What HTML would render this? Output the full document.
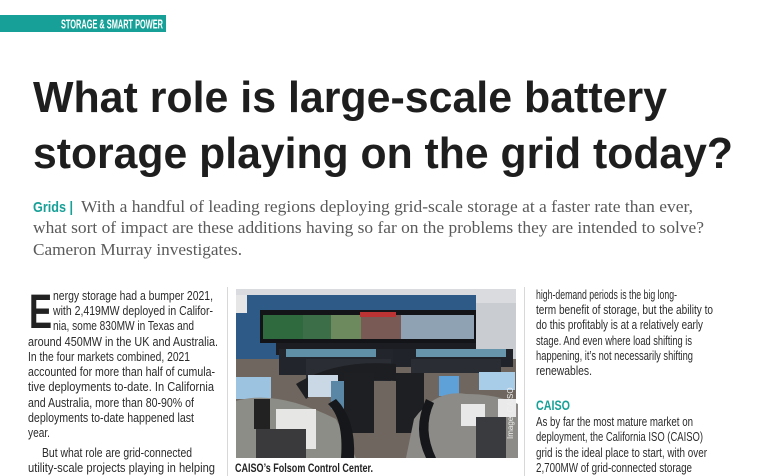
<!DOCTYPE html>
<html><head><meta charset="utf-8"><style>
html,body{margin:0;padding:0;background:#fff;width:768px;height:476px;overflow:hidden}
svg{display:block}
.b{font-family:"Liberation Sans",sans-serif;font-size:12.5px;fill:#2b2b2b}
.s{font-family:"Liberation Serif",serif;font-size:17px;fill:#5a5a5a}
.t{font-family:"Liberation Sans",sans-serif;font-weight:bold;font-size:44px;fill:#1e1e1e}
</style></head><body>
<svg width="768" height="476" viewBox="0 0 768 476" xmlns="http://www.w3.org/2000/svg">
<rect x="0" y="15" width="166" height="17" fill="#17a097"/>
<text x="61" y="28.5" font-family="Liberation Sans,sans-serif" font-weight="bold" font-size="12.5" fill="#fff" textLength="102" lengthAdjust="spacingAndGlyphs">STORAGE &amp; SMART POWER</text>

<text class="t" x="33" y="112" textLength="634" lengthAdjust="spacingAndGlyphs">What role is large-scale battery</text>
<text class="t" x="33" y="168" textLength="700" lengthAdjust="spacingAndGlyphs">storage playing on the grid today?</text>

<text x="33" y="212" font-family="Liberation Sans,sans-serif" font-weight="bold" font-size="15" fill="#17a097" textLength="40" lengthAdjust="spacingAndGlyphs">Grids |</text>
<text class="s" x="81" y="212" textLength="612" lengthAdjust="spacingAndGlyphs">With a handful of leading regions deploying grid-scale storage at a faster rate than ever,</text>
<text class="s" x="33" y="233" textLength="671" lengthAdjust="spacingAndGlyphs">what sort of impact are these additions having so far on the problems they are intended to solve?</text>
<text class="s" x="33" y="255" textLength="209" lengthAdjust="spacingAndGlyphs">Cameron Murray investigates.</text>

<text x="29" y="328" font-family="Liberation Sans,sans-serif" font-weight="bold" font-size="48" fill="#222" textLength="23" lengthAdjust="spacingAndGlyphs">E</text>
<g class="b">
<text x="53" y="300" textLength="160" lengthAdjust="spacingAndGlyphs">nergy storage had a bumper 2021,</text>
<text x="53" y="315" textLength="160" lengthAdjust="spacingAndGlyphs">with 2,419MW deployed in Califor-</text>
<text x="53" y="330" textLength="141" lengthAdjust="spacingAndGlyphs">nia, some 830MW in Texas and</text>
<text x="28" y="346" textLength="190" lengthAdjust="spacingAndGlyphs">around 450MW in the UK and Australia.</text>
<text x="28" y="361" textLength="162" lengthAdjust="spacingAndGlyphs">In the four markets combined, 2021</text>
<text x="28" y="376" textLength="187" lengthAdjust="spacingAndGlyphs">accounted for more than half of cumula-</text>
<text x="28" y="391" textLength="186" lengthAdjust="spacingAndGlyphs">tive deployments to-date. In California</text>
<text x="28" y="407" textLength="166" lengthAdjust="spacingAndGlyphs">and Australia, more than 80-90% of</text>
<text x="28" y="422" textLength="166" lengthAdjust="spacingAndGlyphs">deployments to-date happened last</text>
<text x="28" y="437" textLength="22" lengthAdjust="spacingAndGlyphs">year.</text>
<text x="42" y="457" textLength="150" lengthAdjust="spacingAndGlyphs">But what role are grid-connected</text>
<text x="28" y="472" textLength="187" lengthAdjust="spacingAndGlyphs">utility-scale projects playing in helping</text>
</g>

<line x1="227.5" y1="287" x2="227.5" y2="476" stroke="#d8d8d8"/>
<line x1="524.5" y1="287" x2="524.5" y2="476" stroke="#d8d8d8"/>

<g transform="translate(236,289)">
<rect width="280" height="169" fill="#6f675f"/>
<rect width="280" height="16" fill="#d9dbde"/>
<rect x="0" y="6" width="240" height="64" fill="#2d5a86"/>
<rect x="240" y="14" width="40" height="56" fill="#c9ccd0"/>
<rect x="0" y="6" width="11" height="18" fill="#e6e6e6"/>
<rect x="24" y="21" width="216" height="33" fill="#121418"/>
<rect x="27" y="26" width="211" height="24" fill="#3c6e48"/>
<rect x="27" y="26" width="40" height="24" fill="#2e6a3e"/>
<rect x="95" y="26" width="30" height="24" fill="#6d8a5e"/>
<rect x="125" y="26" width="40" height="24" fill="#7a5a55"/>
<rect x="165" y="26" width="73" height="24" fill="#8fa2b4"/>
<rect x="124" y="23" width="36" height="5" fill="#b33"/>
<rect x="40" y="54" width="200" height="12" fill="#1b1d22"/>
<rect x="43" y="60" width="115" height="26" fill="#22262c"/>
<rect x="157" y="60" width="120" height="18" fill="#20242a"/>
<rect x="50" y="60" width="90" height="8" fill="#5f90a8"/>
<rect x="180" y="60" width="90" height="8" fill="#6796ac"/>
<rect x="70" y="70" width="85" height="22" fill="#2a2d33"/>
<rect x="175" y="70" width="90" height="14" fill="#2a2d33"/>
<path d="M60 95 Q100 70 160 75 L160 92 Q100 88 70 110Z" fill="#1c1e22"/>
<rect x="0" y="88" width="35" height="22" fill="#9cc3e0"/>
<rect x="72" y="86" width="30" height="22" fill="#c9d8e4"/>
<rect x="95" y="92" width="20" height="28" fill="#5a87a6"/>
<rect x="108" y="84" width="30" height="60" fill="#1d1f23"/>
<rect x="160" y="84" width="28" height="60" fill="#1d1f23"/>
<rect x="203" y="87" width="20" height="20" fill="#5ea0d8"/>
<rect x="243" y="83" width="36" height="18" fill="#a8cde8"/>
<path d="M0 112 Q40 100 100 130 L120 169 L0 169Z" fill="#8d8d88"/>
<path d="M178 130 Q200 100 230 105 Q260 105 282 115 L282 169 L170 169Z" fill="#8c8b87"/>
<path d="M100 110 Q120 130 118 169 L105 169 Q108 130 92 115Z" fill="#15171a"/>
<path d="M190 110 Q176 140 190 169 L200 169 Q186 140 198 114Z" fill="#15171a"/>
<rect x="40" y="120" width="40" height="40" fill="#e6e6e4"/>
<rect x="18" y="110" width="16" height="30" fill="#222"/>
<rect x="225" y="115" width="24" height="22" fill="#e8e8e8"/>
<rect x="262" y="110" width="18" height="18" fill="#eaeaea"/>
<rect x="20" y="140" width="50" height="29" fill="#3a3a3c"/>
<rect x="240" y="128" width="30" height="41" fill="#3a3b3e"/>
<text x="0" y="0" transform="translate(277,150) rotate(-90)" font-family="Liberation Sans,sans-serif" font-size="8" fill="#eee">Image: CAISO</text>
</g>

<text x="235" y="472" font-family="Liberation Sans,sans-serif" font-weight="bold" font-size="12" fill="#222" textLength="138" lengthAdjust="spacingAndGlyphs">CAISO’s Folsom Control Center.</text>

<g class="b">
<text x="536" y="299" textLength="141" lengthAdjust="spacingAndGlyphs">high-demand periods is the big long-</text>
<text x="536" y="314" textLength="177" lengthAdjust="spacingAndGlyphs">term benefit of storage, but the ability to</text>
<text x="536" y="329" textLength="167" lengthAdjust="spacingAndGlyphs">do this profitably is at a relatively early</text>
<text x="536" y="345" textLength="156" lengthAdjust="spacingAndGlyphs">stage. And even where load shifting is</text>
<text x="536" y="360" textLength="157" lengthAdjust="spacingAndGlyphs">happening, it’s not necessarily shifting</text>
<text x="536" y="375" textLength="56" lengthAdjust="spacingAndGlyphs">renewables.</text>
<text x="536" y="426" textLength="157" lengthAdjust="spacingAndGlyphs">As by far the most mature market on</text>
<text x="536" y="441" textLength="167" lengthAdjust="spacingAndGlyphs">deployment, the California ISO (CAISO)</text>
<text x="536" y="457" textLength="171" lengthAdjust="spacingAndGlyphs">grid is the ideal place to start, with over</text>
<text x="536" y="472" textLength="156" lengthAdjust="spacingAndGlyphs">2,700MW of grid-connected storage</text>
</g>
<text x="536" y="410" font-family="Liberation Sans,sans-serif" font-weight="bold" font-size="14" fill="#17a097" textLength="34" lengthAdjust="spacingAndGlyphs">CAISO</text>
</svg>
</body></html>
